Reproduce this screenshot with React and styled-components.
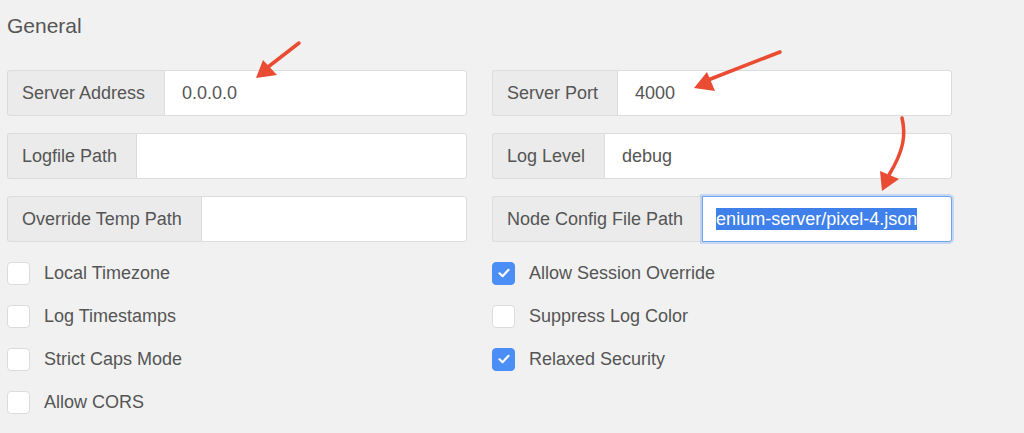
import React from 'react'
import styled, { createGlobalStyle } from 'styled-components'

const GlobalStyle = createGlobalStyle`
  html, body {
    margin: 0;
    padding: 0;
    background: #f1f1f1;
  }
  body {
    font-family: "Liberation Sans", Arial, sans-serif;
    color: #555;
  }
`

const leftFields = [
  { label: 'Server Address', value: '0.0.0.0' },
  { label: 'Logfile Path', value: '' },
  { label: 'Override Temp Path', value: '' },
]

const rightFields = [
  { label: 'Server Port', value: '4000' },
  { label: 'Log Level', value: 'debug' },
  { label: 'Node Config File Path', value: 'enium-server/pixel-4.json', focused: true },
]

const leftChecks = [
  { label: 'Local Timezone', checked: false },
  { label: 'Log Timestamps', checked: false },
  { label: 'Strict Caps Mode', checked: false },
  { label: 'Allow CORS', checked: false },
]

const rightChecks = [
  { label: 'Allow Session Override', checked: true },
  { label: 'Suppress Log Color', checked: false },
  { label: 'Relaxed Security', checked: true },
]

function Field({ label, value, focused }) {
  return (
    <FieldRow>
      <FieldLabel>{label}</FieldLabel>
      <FieldInput $focused={focused}>
        {focused ? <Selected>{value}</Selected> : value}
      </FieldInput>
    </FieldRow>
  )
}

function Check({ label, checked }) {
  return (
    <CheckRow>
      <Box $checked={checked}>
        {checked && (
          <svg width="14" height="14" viewBox="0 0 14 14">
            <path d="M2.5 7.3 L5.6 10.2 L11.5 3.8" fill="none" stroke="#fff" strokeWidth="2.2" strokeLinecap="round" strokeLinejoin="round" />
          </svg>
        )}
      </Box>
      <CheckLabel>{label}</CheckLabel>
    </CheckRow>
  )
}

export default function App() {
  return (
    <Page>
      <GlobalStyle />
      <Title>General</Title>
      <Columns>
        <Column>
          {leftFields.map((f) => <Field key={f.label} {...f} />)}
          <CheckList>
            {leftChecks.map((c) => <Check key={c.label} {...c} />)}
          </CheckList>
        </Column>
        <Column>
          {rightFields.map((f) => <Field key={f.label} {...f} />)}
          <CheckList>
            {rightChecks.map((c) => <Check key={c.label} {...c} />)}
          </CheckList>
        </Column>
      </Columns>

      {/* red annotation arrows drawn over the form */}
      <Arrows width="1024" height="433" viewBox="0 0 1024 433">
        <g stroke="#ea4b33" strokeWidth="3.5" strokeLinecap="round" fill="none">
          <path d="M299 43 L268 67" />
          <path d="M780 52 L708 80" />
          <path d="M902 118 C906 135 904 150 889 175" />
        </g>
        <g fill="#ea4b33">
          <polygon points="256,78 263,60 277,75" />
          <polygon points="694,88 707,72 715,91" />
          <polygon points="882,191 880,171 899,179" />
        </g>
      </Arrows>
    </Page>
  )
}

const Page = styled.div`
  position: relative;
  width: 1024px;
  height: 433px;
  padding: 14px 0 0 7px;
  box-sizing: border-box;
  overflow: hidden;
`

const Title = styled.h2`
  margin: 0 0 32px;
  font-size: 21px;
  line-height: 24px;
  font-weight: normal;
  color: #555;
`

const Columns = styled.div`
  display: grid;
  grid-template-columns: 460px 460px;
  column-gap: 25px;
`

const Column = styled.div`
  display: flex;
  flex-direction: column;
  gap: 17px;
`

const FieldRow = styled.div`
  display: flex;
  height: 46px;
  box-sizing: border-box;
`

const FieldLabel = styled.div`
  display: flex;
  align-items: center;
  padding: 0 19px 0 14px;
  background: #ebebeb;
  border: 1px solid #dcdcdc;
  border-right: none;
  border-radius: 3px 0 0 3px;
  font-size: 18px;
  color: #555;
  white-space: nowrap;
`

const FieldInput = styled.div`
  flex: 1;
  display: flex;
  align-items: center;
  padding-left: ${(p) => (p.$focused ? '13px' : '17px')};
  background: #fff;
  border: 1px solid ${(p) => (p.$focused ? '#6ea2f3' : '#dcdcdc')};
  border-radius: 0 3px 3px 0;
  box-shadow: ${(p) => (p.$focused ? '0 0 0 2px rgba(120, 165, 240, 0.35)' : 'none')};
  font-size: 18px;
  color: #555;
  overflow: hidden;
  white-space: nowrap;
`

const Selected = styled.span`
  background: #3f80ea;
  color: #fff;
  line-height: 22px;
`

const CheckList = styled.div`
  display: flex;
  flex-direction: column;
  gap: 19px;
  margin-top: 2px;
`

const CheckRow = styled.label`
  display: flex;
  align-items: center;
  gap: 14px;
  height: 24px;
`

const Box = styled.span`
  display: flex;
  align-items: center;
  justify-content: center;
  width: 23px;
  height: 23px;
  box-sizing: border-box;
  border-radius: 4px;
  background: ${(p) => (p.$checked ? '#4b8ef6' : '#fff')};
  border: 1px solid ${(p) => (p.$checked ? '#4b8ef6' : '#dcdcdc')};
`

const CheckLabel = styled.span`
  font-size: 18px;
  color: #555;
`

const Arrows = styled.svg`
  position: absolute;
  left: 0;
  top: 0;
  pointer-events: none;
`
